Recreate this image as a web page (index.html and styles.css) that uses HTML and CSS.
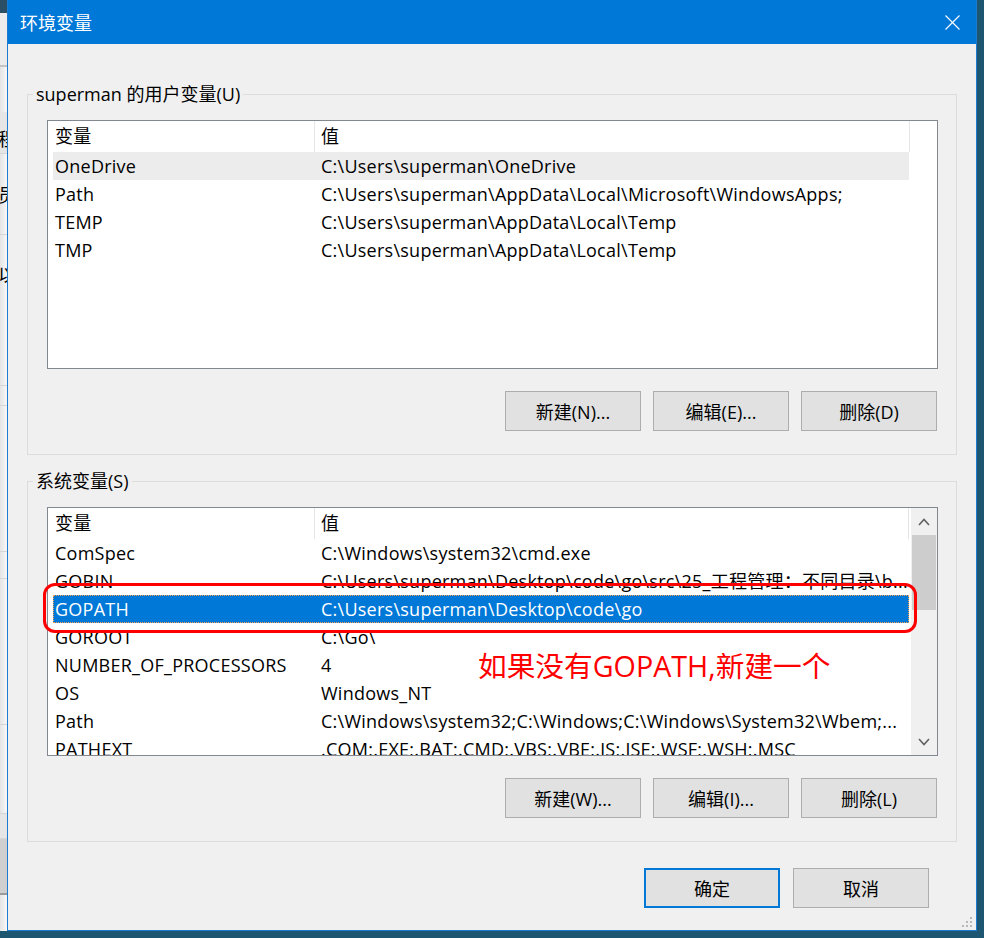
FILE: index.html
```html
<!DOCTYPE html>
<html>
<head>
  <title>环境变量</title>
  <link rel="stylesheet" href="styles.css">
</head>
<body>
  <div class="desk">
    <div class="bgwin">
      <div class="bg-top"></div>
      <div class="bg-bar"></div>
      <div class="bg-row h46"></div>
      <div class="bg-row h42 shade low"><span>程</span></div>
      <div class="bg-row h80"><span>员</span></div>
      <div class="bg-row h78 open"><span>以</span></div>
      <div class="bg-row h72"></div>
      <div class="bg-row h19"></div>
      <div class="bg-row h145"></div>
      <div class="bg-row h26"></div>
      <div class="bg-row h145"></div>
      <div class="bg-row h88"></div>
      <div class="bg-row h24 shade"></div>
      <div class="bg-row h56 dark"></div>
    </div>

    <div class="dialog">
      <div class="titlebar">
        <span class="title">环境变量</span>
        <svg class="close" width="15" height="15" viewBox="0 0 15 15">
          <path d="M0.5 0.5 L14.5 14.5 M14.5 0.5 L0.5 14.5" stroke="#fff" stroke-width="1.1" fill="none"/>
        </svg>
      </div>

      <div class="content">
        <fieldset class="group group-user">
          <legend>superman 的用户变量(U)</legend>
          <div class="group-body">
            <div class="list">
              <div class="list-main">
                <div class="list-head">
                  <div class="hcell hcell-name">变量</div>
                  <div class="hcell hcell-value">值</div>
                </div>
                <div class="row hover"><div class="cell-name">OneDrive</div><div class="cell-value">C:\Users\superman\OneDrive</div></div>
                <div class="row"><div class="cell-name">Path</div><div class="cell-value">C:\Users\superman\AppData\Local\Microsoft\WindowsApps;</div></div>
                <div class="row"><div class="cell-name">TEMP</div><div class="cell-value">C:\Users\superman\AppData\Local\Temp</div></div>
                <div class="row"><div class="cell-name">TMP</div><div class="cell-value">C:\Users\superman\AppData\Local\Temp</div></div>
              </div>
            </div>
            <div class="buttons">
              <button>新建(N)...</button>
              <button>编辑(E)...</button>
              <button>删除(D)</button>
            </div>
          </div>
        </fieldset>

        <fieldset class="group group-sys">
          <legend>系统变量(S)</legend>
          <div class="group-body">
            <div class="list">
              <div class="list-main">
                <div class="list-head">
                  <div class="hcell hcell-name">变量</div>
                  <div class="hcell hcell-value short">值</div>
                </div>
                <div class="row"><div class="cell-name">ComSpec</div><div class="cell-value">C:\Windows\system32\cmd.exe</div></div>
                <div class="row"><div class="cell-name">GOBIN</div><div class="cell-value">C:\Users\superman\Desktop\code\go\src\25_工程管理：不同目录\b...</div></div>
                <div class="row selected"><div class="cell-name">GOPATH</div><div class="cell-value">C:\Users\superman\Desktop\code\go</div></div>
                <div class="row"><div class="cell-name">GOROOT</div><div class="cell-value">C:\Go\</div></div>
                <div class="row"><div class="cell-name">NUMBER_OF_PROCESSORS</div><div class="cell-value">4</div></div>
                <div class="row"><div class="cell-name">OS</div><div class="cell-value">Windows_NT</div></div>
                <div class="row"><div class="cell-name">Path</div><div class="cell-value">C:\Windows\system32;C:\Windows;C:\Windows\System32\Wbem;...</div></div>
                <div class="row"><div class="cell-name">PATHEXT</div><div class="cell-value">.COM;.EXE;.BAT;.CMD;.VBS;.VBE;.JS;.JSE;.WSF;.WSH;.MSC</div></div>
              </div>
              <div class="scrollbar">
                <div class="arrow">
                  <svg width="12" height="8" viewBox="0 0 12 8"><path d="M1 7 L6 1.5 L11 7" stroke="#606060" stroke-width="1.6" fill="none"/></svg>
                </div>
                <div class="thumb"></div>
                <div class="track"></div>
                <div class="arrow">
                  <svg width="12" height="8" viewBox="0 0 12 8"><path d="M1 1 L6 6.5 L11 1" stroke="#606060" stroke-width="1.6" fill="none"/></svg>
                </div>
              </div>
            </div>
            <div class="buttons">
              <button>新建(W)...</button>
              <button>编辑(I)...</button>
              <button>删除(L)</button>
            </div>

            <!-- annotation drawn over the screenshot -->
            <div class="mark-box"></div>
            <div class="mark-text">如果没有GOPATH,新建一个</div>
          </div>
        </fieldset>

        <div class="footer">
          <button class="primary">确定</button>
          <button>取消</button>
        </div>
      </div>

      <svg class="grip" width="12" height="12" viewBox="0 0 12 12">
        <rect x="8" y="0" width="2" height="2" fill="#b8b8b8"/>
        <rect x="4" y="4" width="2" height="2" fill="#b8b8b8"/>
        <rect x="8" y="4" width="2" height="2" fill="#b8b8b8"/>
        <rect x="0" y="8" width="2" height="2" fill="#b8b8b8"/>
        <rect x="4" y="8" width="2" height="2" fill="#b8b8b8"/>
        <rect x="8" y="8" width="2" height="2" fill="#b8b8b8"/>
      </svg>
    </div>
  </div>
</body>
</html>
```

FILE: styles.css
```css
body {
  margin: 0;
  background-color: #1d5670;
  font-family: "Open Sans", "Noto Sans CJK SC", sans-serif;
  font-size: 18px;
  color: #000;
}

.desk {
  display: flex;
  height: 931px;
}

/* window behind the dialog */
.bgwin {
  width: 7px;
  flex: none;
  display: flex;
  flex-direction: column;
  overflow: hidden;
  background: linear-gradient(to right, #e4e4e4, #f8f8f8);
}

.bg-top {
  height: 13px;
  background-color: #2b5066;
}

.bg-bar {
  height: 52px;
  background-color: #ececec;
  border-bottom: 2px solid #c4c4c4;
}

.bg-row {
  display: flex;
  justify-content: flex-end;
  align-items: center;
  border-bottom: 1px solid #d6d6d6;
  font-family: "Noto Sans CJK SC", sans-serif;
  font-size: 18px;
  line-height: 24px;
  white-space: nowrap;
}

.bg-row span {
  margin-right: -9px;
}

.bg-row.low { align-items: flex-end; padding-bottom: 3px; box-sizing: border-box; }
.bg-row.open { border-bottom: none; }
.bg-row.shade { background-color: #e6e6e6; }
.bg-row.dark { background-color: #cfcfcf; border-bottom: 2px solid #9a9a9a; }

.h19 { height: 19px; }
.h24 { height: 24px; }
.h26 { height: 26px; }
.h42 { height: 42px; }
.h46 { height: 45px; border-bottom: none; }
.h56 { height: 54px; }
.h72 { height: 72px; }
.h78 { height: 78px; }
.h80 { height: 80px; }
.h88 { height: 88px; }
.h145 { height: 145px; }

/* dialog */
.dialog {
  position: relative;
  width: 970px;
  height: 931px;
  box-sizing: border-box;
  flex: none;
  display: flex;
  flex-direction: column;
  background-color: #f0f0f0;
  border: 1px solid #1a7bd0;
  border-top: none;
}

.titlebar {
  height: 44px;
  flex: none;
  display: flex;
  align-items: center;
  justify-content: space-between;
  padding: 0 16px 0 12px;
  background-color: #0078d7;
  color: #fff;
}

.title {
  font-family: "Noto Sans CJK SC", sans-serif;
  font-size: 18px;
}

.content {
  padding: 0 19px;
}

.group {
  margin: 0;
  padding: 0;
  min-width: 0;
  border: 1px solid #dcdcdc;
}

.group-user {
  margin-top: 39px;
}

.group-sys {
  margin-top: 15px;
}

.group legend {
  margin-left: 5px;
  padding: 0 3px;
  line-height: 22px;
}

.group-body {
  position: relative;
  padding: 15px 18px 23px 19px;
}

/* list view */
.list {
  height: 249px;
  box-sizing: border-box;
  display: flex;
  background-color: #fff;
  border: 1px solid #828790;
  overflow: hidden;
  letter-spacing: 0.25px;
}

.list-main {
  flex: 1;
  min-width: 0;
}

.list-head {
  display: flex;
  height: 31px;
  line-height: 31px;
}

.hcell {
  box-sizing: border-box;
  border-right: 1px solid #e5e5e5;
}

.hcell-name {
  width: 267px;
  padding-left: 7px;
}

.hcell-value {
  width: 595px;
  padding-left: 6px;
}

.hcell-value.short {
  width: 594px;
}

.row {
  display: flex;
  width: 856px;
  height: 28px;
  line-height: 28px;
  margin-left: 5px;
  white-space: nowrap;
}

.row.hover {
  background-color: #ececec;
}

.row.selected {
  background-color: #0078d7;
  color: #fff;
  outline: 1px dotted #f0a050;
  outline-offset: -1px;
}

.cell-name {
  width: 266px;
  flex: none;
  padding-left: 2px;
  box-sizing: border-box;
}

.cell-value {
  flex: 1;
  min-width: 0;
  padding-left: 2px;
  overflow: hidden;
}

.scrollbar {
  width: 26px;
  flex: none;
  display: flex;
  flex-direction: column;
  background-color: #f0f0f0;
}

.scrollbar .arrow {
  height: 27px;
  display: flex;
  align-items: center;
  justify-content: center;
}

.scrollbar .thumb {
  height: 75px;
  margin: 0 1px;
  background-color: #cdcdcd;
}

.scrollbar .track {
  flex: 1;
}

/* buttons */
.buttons {
  display: flex;
  justify-content: flex-end;
  gap: 12px;
  margin-top: 22px;
  padding-right: 1px;
}

button {
  width: 136px;
  height: 40px;
  box-sizing: border-box;
  padding: 0;
  background-color: #e1e1e1;
  border: 1px solid #adadad;
  font-family: "Open Sans", "Noto Sans CJK SC", sans-serif;
  font-size: 18px;
  color: #000;
}

button.primary {
  border: 2px solid #0078d7;
}

.footer {
  display: flex;
  justify-content: flex-end;
  gap: 13px;
  margin-top: 26px;
  margin-right: 28px;
}

/* red annotation */
.mark-box {
  position: absolute;
  left: 15px;
  top: 91px;
  width: 874px;
  height: 50px;
  box-sizing: border-box;
  border: 3px solid #ff0000;
  border-radius: 12px;
}

.mark-text {
  position: absolute;
  left: 450px;
  top: 155px;
  font-family: "Open Sans", "Noto Sans CJK SC", sans-serif;
  font-size: 28.7px;
  line-height: 38px;
  color: #ff0000;
  white-space: nowrap;
}

.grip {
  position: absolute;
  right: 2px;
  bottom: 1px;
}
```
